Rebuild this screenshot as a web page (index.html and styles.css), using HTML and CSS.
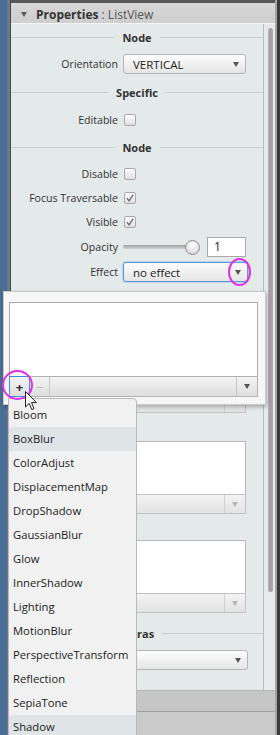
FILE: index.html
```html
<!DOCTYPE html>
<html>
<head>
<meta charset="utf-8">
<link rel="stylesheet" href="styles.css">
</head>
<body>
<div class="screen">
  <div class="desk"></div>
  <div class="inspector">
    <div class="topline"></div>
    <div class="header"><span class="tri"></span><b>Properties</b>&nbsp;: ListView</div>
    <div class="main">
      <div class="content">
        <div class="section s-node1"><span>Node</span></div>
        <div class="row r-orient"><label>Orientation</label><div class="combo">VERTICAL<span class="arrow"></span></div></div>
        <div class="section s-specific"><span>Specific</span></div>
        <div class="row r-edit"><label>Editable</label><span class="check"></span></div>
        <div class="section s-node2"><span>Node</span></div>
        <div class="row r-disable"><label>Disable</label><span class="check"></span></div>
        <div class="row r-std"><label>Focus Traversable</label><span class="check on"><svg viewBox="0 0 12 12" width="12" height="12"><path d="M3 6.2 L5 8.8 L9.2 2.6" fill="none" stroke="#666" stroke-width="1.3"/></svg></span></div>
        <div class="row r-std"><label>Visible</label><span class="check on"><svg viewBox="0 0 12 12" width="12" height="12"><path d="M3 6.2 L5 8.8 L9.2 2.6" fill="none" stroke="#666" stroke-width="1.3"/></svg></span></div>
        <div class="row r-opacity"><label>Opacity</label>
          <div class="opacity"><div class="slider"><div class="strack"></div><div class="sthumb"></div></div><div class="field">1</div></div>
        </div>
        <div class="row r-std"><label>Effect</label><div class="combo focus">no effect<span class="arrow"></span></div></div>

        <div class="listblock b-a"><div class="lbox"></div><div class="lbar"><span class="seg"></span></div></div>
        <div class="listblock b-b"><div class="lbox"></div><div class="lbar"><span class="seg"></span></div></div>
        <div class="listblock b-c"><div class="lbox"></div><div class="lbar"><span class="seg"></span></div></div>
        <div class="section s-extras"><span>Extras</span></div>
        <div class="row r-extra"><label>Camera</label><div class="combo wide">&nbsp;<span class="arrow"></span></div></div>
      </div>
      <div class="track"><div class="thumb"></div></div>
    </div>
    <div class="footer"><div class="foot1"></div><div class="foot2"></div></div>
  </div>
  <div class="edge"></div>

  <div class="popup">
    <div class="plist"></div>
    <div class="ptools">
      <span class="pbtn plus">+</span>
      <span class="pbtn minus">&minus;</span>
      <span class="pfill"></span>
      <span class="parrow"><span class="arrow"></span></span>
    </div>
  </div>

  <div class="menu">
    <div class="item">Bloom</div>
    <div class="item hl">BoxBlur</div>
    <div class="item">ColorAdjust</div>
    <div class="item">DisplacementMap</div>
    <div class="item">DropShadow</div>
    <div class="item">GaussianBlur</div>
    <div class="item">Glow</div>
    <div class="item">InnerShadow</div>
    <div class="item">Lighting</div>
    <div class="item">MotionBlur</div>
    <div class="item">PerspectiveTransform</div>
    <div class="item">Reflection</div>
    <div class="item">SepiaTone</div>
    <div class="item hl">Shadow</div>
  </div>

  <div class="mark mark-effect"></div>
  <div class="mark mark-plus"></div>
  <svg class="cursor" width="13" height="20" viewBox="0 0 13 20"><path d="M0.5 0.5 L0.5 16 L4.2 12.4 L6.8 18.6 L9 17.6 L6.5 11.6 L11.5 11.6 Z" fill="#fff" stroke="#222" stroke-width="1"/></svg>
</div>
</body>
</html>
```

FILE: styles.css
```css
* { box-sizing: border-box; margin: 0; padding: 0; }
html, body { width: 280px; height: 735px; overflow: hidden; }
body {
  font-family: "Open Sans", "Noto Sans", sans-serif;
  font-size: 11px;
  color: #2b2b2b;
  background: #46698f;
}
.screen { position: relative; display: flex; width: 280px; height: 735px; }

.desk {
  width: 10px;
  background: linear-gradient(90deg, #4b6e96 0, #4b6e96 6px, #607590 7px, #707b87 9px);
}
.inspector {
  width: 265px;
  display: flex;
  flex-direction: column;
  border-left: 1px solid #43484e;
  background: #e4e9ea;
}
.edge { width: 5px; background: linear-gradient(90deg, #a4a4a4 0, #a4a4a4 2px, #3a3a3a 2px); }

.topline { height: 3px; background: #5a5a5a; }
.header {
  height: 21px;
  display: flex;
  align-items: center;
  padding-left: 10px;
  padding-top: 2px;
  font-size: 12px;
  color: #555;
  background: linear-gradient(#d7d7d7, #cecece);
  border-bottom: 1px solid #f3f5f5;
}
.header b { color: #333; }
.tri {
  width: 0; height: 0;
  border-left: 3px solid transparent;
  border-right: 3px solid transparent;
  border-top: 5px solid #5a5a5a;
  margin-right: 9px;
}

.main { height: 666px; display: flex; }
.content {
  width: 253px;
  border-right: 1px solid #b9bdbe;
  display: flex;
  flex-direction: column;
}
.track { width: 11px; background: #e7eaeb; padding-top: 4px; }
.thumb {
  margin-left: 4px;
  width: 5px;
  height: 564px;
  border-radius: 3px;
  background: linear-gradient(90deg, #b9b2b8, #a39ba2 50%, #b3acb2);
}
.footer { flex: 1; display: flex; flex-direction: column; }
.foot1 { height: 22px; background: #c6c6c6; border-top: 1px solid #b5b5b5; border-bottom: 1px solid #9f9f9f; }
.foot2 { flex: 1; background: #cacaca; }

.section {
  display: flex;
  align-items: center;
  gap: 8px;
  font-weight: bold;
  color: #333;
}
.section::before, .section::after { content: ""; flex: 1; height: 1px; background: #c9cdce; }
.s-node1 { height: 26px; }
.s-specific { height: 28px; }
.s-node2 { height: 27px; }
.s-extras { height: 26px; margin-top: 7px; }

.row {
  display: grid;
  grid-template-columns: 107px auto;
  column-gap: 5px;
  align-items: center;
  justify-content: start;
}
.row label { text-align: right; color: #333; white-space: nowrap; font-size: 10.6px; }
.r-orient { height: 28px; }
.r-edit { height: 28px; }
.r-disable { height: 25px; }
.r-std { height: 24px; }
.r-opacity { height: 26px; }
.r-extra { height: 28px; }
.r-extra label { visibility: hidden; }

.combo {
  width: 123px;
  height: 20px;
  border: 1px solid #b5b5b5;
  border-radius: 3px;
  background: linear-gradient(#fdfdfd, #e5e5e5);
  display: flex;
  align-items: center;
  justify-content: space-between;
  padding-left: 9px;
  padding-right: 6px;
  font-size: 11.5px;
  color: #222;
}
.combo.focus {
  width: 125px;
  border-color: #5f95dc;
  box-shadow: 0 0 0 1px rgba(140, 185, 240, 0.45);
}
.combo.wide { width: 125px; }
.arrow {
  width: 0; height: 0;
  border-left: 3.5px solid transparent;
  border-right: 3.5px solid transparent;
  border-top: 5px solid #555;
}

.check {
  width: 12px; height: 12px;
  margin-left: 1px;
  border: 1px solid #a8a8a8;
  border-radius: 2px;
  background: linear-gradient(#ffffff, #dedede);
  display: flex;
  align-items: center;
  justify-content: center;
}
.check svg { display: block; margin: -1px; }

.opacity { display: flex; align-items: center; gap: 7px; }
.slider { position: relative; width: 77px; height: 16px; }
.strack {
  position: absolute; left: 0; right: 8px; top: 6px; height: 4px;
  border-radius: 2px;
  background: linear-gradient(#9f9f9f, #d2d2d2);
}
.sthumb {
  position: absolute; left: 62px; top: 1px;
  width: 15px; height: 15px;
  border-radius: 50%;
  border: 1px solid #8e8e8e;
  background: radial-gradient(circle at 50% 35%, #ffffff, #e2e2e2 60%, #c9c9c9);
}
.field {
  width: 39px; height: 20px;
  border: 1px solid #a9a9a9;
  background: #fff;
  padding-left: 6px;
  font-size: 12px;
  line-height: 18px;
  color: #222;
}

.listblock { margin-left: 112px; width: 123px; }
.lbox { background: #fff; border: 1px solid #b7b7b7; border-bottom: 0; }
.lbar {
  height: 20px;
  border: 1px solid #c2c2c2;
  background: linear-gradient(#f3f3f3, #e3e3e3);
  display: flex;
  justify-content: flex-end;
}
.seg {
  width: 21px;
  border-left: 1px solid #cfcfcf;
  display: flex; align-items: center; justify-content: center;
}
.seg::after {
  content: "";
  border-left: 3.5px solid transparent;
  border-right: 3.5px solid transparent;
  border-top: 5px solid #b5b5b5;
}
.b-a { margin-top: 18px; }
.b-a .lbox { height: 91px; }
.b-b { margin-top: 28px; }
.b-b .lbox { height: 53px; }
.b-c { margin-top: 26px; }
.b-c .lbox { height: 53px; }

/* overlays */
.popup {
  position: absolute;
  left: 3px; top: 291px;
  width: 263px; height: 114px;
  background: #f6f6f6;
  border: 1px solid #c9c9c9;
  box-shadow: 1px 2px 4px rgba(0, 0, 0, 0.28);
  padding: 10px 7px 0 5px;
}
.plist { height: 74px; background: #fff; border: 1px solid #a9a9a9; border-bottom: 0; }
.ptools {
  height: 21px;
  display: flex;
  border: 1px solid #b3b3b3;
  background: linear-gradient(#f4f4f4, #dedede);
}
.pbtn {
  width: 20px;
  display: flex; align-items: center; justify-content: center;
  font-size: 13px;
  font-weight: bold;
  color: #333;
  border-right: 1px solid #c6c6c6;
}
.plus { width: 21px; margin: -1px 0 -1px -1px; border: 1px solid #3a8de0; color: #2a2a2a; }
.minus { color: #b8b8b8; font-weight: normal; }
.pfill { flex: 1; border-right: 1px solid #c6c6c6; }
.parrow { width: 20px; display: flex; align-items: center; justify-content: center; }

.menu {
  position: absolute;
  left: 8px; top: 398px;
  width: 129px; height: 345px;
  background: #f1f1f1;
  border: 1px solid #b9b9b9;
  border-radius: 0 4px 0 0;
  padding-top: 4px;
}
.item {
  height: 24px;
  line-height: 24px;
  padding-left: 4px;
  font-size: 11.25px;
  color: #222;
}
.item.hl { background: #dfe4e7; }

.mark {
  position: absolute;
  border: 2px solid #e12fe0;
  border-radius: 50%;
}
.mark-effect { left: 228px; top: 258px; width: 23px; height: 28px; }
.mark-plus { left: 2px; top: 370px; width: 31px; height: 30px; }
.cursor { position: absolute; left: 25px; top: 391px; }
```
